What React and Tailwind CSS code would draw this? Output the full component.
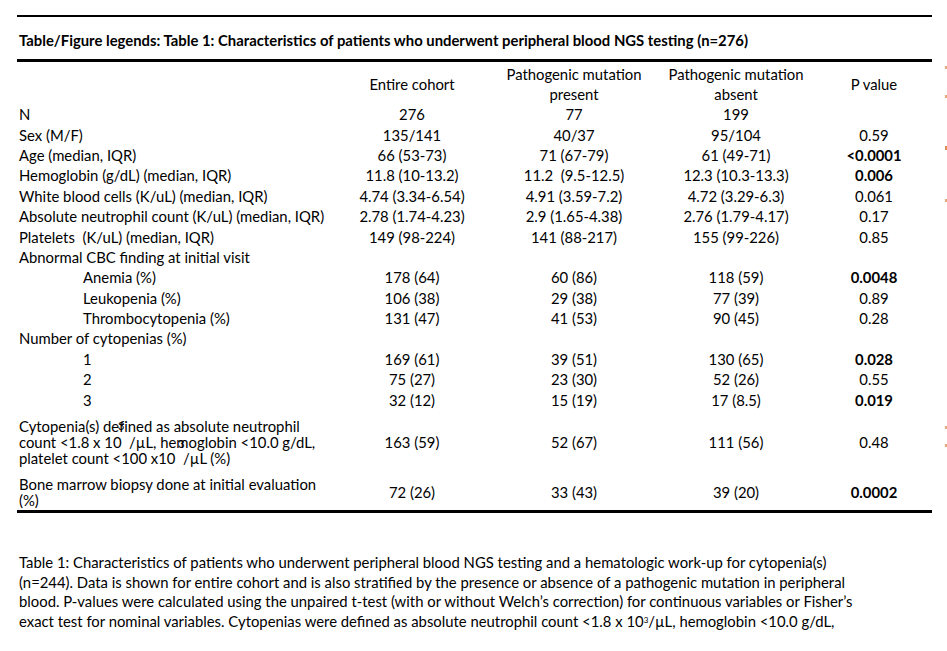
import React from 'react';

const rows = [
  { label: 'N', vals: ['276', '77', '199', ''] },
  { label: 'Sex (M/F)', vals: ['135/141', '40/37', '95/104', '0.59'] },
  { label: 'Age (median, IQR)', vals: ['66 (53-73)', '71 (67-79)', '61 (49-71)', '<0.0001'], bold: true },
  { label: 'Hemoglobin (g/dL) (median, IQR)', vals: ['11.8 (10-13.2)', '11.2  (9.5-12.5)', '12.3 (10.3-13.3)', '0.006'], bold: true },
  { label: 'White blood cells (K/uL) (median, IQR)', vals: ['4.74 (3.34-6.54)', '4.91 (3.59-7.2)', '4.72 (3.29-6.3)', '0.061'] },
  { label: 'Absolute neutrophil count (K/uL) (median, IQR)', vals: ['2.78 (1.74-4.23)', '2.9 (1.65-4.38)', '2.76 (1.79-4.17)', '0.17'] },
  { label: 'Platelets  (K/uL) (median, IQR)', vals: ['149 (98-224)', '141 (88-217)', '155 (99-226)', '0.85'] },
  { label: 'Abnormal CBC finding at initial visit', vals: ['', '', '', ''] },
  { label: 'Anemia (%)', vals: ['178 (64)', '60 (86)', '118 (59)', '0.0048'], bold: true, indent: true },
  { label: 'Leukopenia (%)', vals: ['106 (38)', '29 (38)', '77 (39)', '0.89'], indent: true },
  { label: 'Thrombocytopenia (%)', vals: ['131 (47)', '41 (53)', '90 (45)', '0.28'], indent: true },
  { label: 'Number of cytopenias (%)', vals: ['', '', '', ''] },
  { label: '1', vals: ['169 (61)', '39 (51)', '130 (65)', '0.028'], bold: true, indent: true },
  { label: '2', vals: ['75 (27)', '23 (30)', '52 (26)', '0.55'], indent: true },
  { label: '3', vals: ['32 (12)', '15 (19)', '17 (8.5)', '0.019'], bold: true, indent: true },
];

const grid = 'grid grid-cols-[313px_164px_160px_164px_112px]';

function Row({ label, vals, bold, indent }) {
  return (
    <div className={`${grid} h-[20.4px] items-center leading-[20px]`}>
      <div className={`whitespace-pre ${indent ? 'pl-[66px]' : 'pl-[2px]'}`}>{label}</div>
      {vals.map((v, i) => (
        <div key={i} className={`text-center whitespace-pre ${bold && i === 3 ? 'font-bold' : ''}`}>{v}</div>
      ))}
    </div>
  );
}

export default function App() {
  return (
    <div className="relative w-[947px] h-[651px] overflow-hidden bg-white text-black text-[14.85px] font-['Lato','Open_Sans',sans-serif]">
      <div className="ml-[17px] pt-[15px] w-[915px]">
        <div className="h-[2px] bg-black" />
        <div className="h-[42px] pt-[13px] pl-[2px] leading-[20px] font-bold">
          Table/Figure legends: Table 1: Characteristics of patients who underwent peripheral blood NGS testing (n=276)
        </div>
        <div className="h-[3px] bg-black" />

        {/* header */}
        <div className={`${grid} items-center pt-[1px] h-[42px] leading-[20px]`}>
          <div />
          <div className="text-center">Entire cohort</div>
          <div className="text-center">Pathogenic mutation<br />present</div>
          <div className="text-center">Pathogenic mutation<br />absent</div>
          <div className="text-center">P value</div>
        </div>

        {rows.map((r, i) => (
          <Row key={i} {...r} />
        ))}

        <div className={`${grid} items-center pt-[8px] leading-[16px]`}>
          <div className="pl-[2px]">
            Cytopenia(s) de
            <span className="relative">
              f<span className="absolute left-[-1px] top-[3px] text-[11px] leading-none">3</span>
            </span>
            ined as absolute neutrophil<br />
            count &lt;1.8 x 10 &nbsp;/µL, he
            <span className="relative">
              m<span className="absolute left-[2px] top-[5px] text-[11px] leading-none">3</span>
            </span>
            oglobin &lt;10.0 g/dL,<br />
            platelet count &lt;100 x10 &nbsp;/µL (%)
          </div>
          <div className="text-center">163 (59)</div>
          <div className="text-center">52 (67)</div>
          <div className="text-center">111 (56)</div>
          <div className="text-center">0.48</div>
        </div>

        <div className={`${grid} items-center pt-[10px] pb-[2px] leading-[16px]`}>
          <div className="pl-[2px]">
            Bone marrow biopsy done at initial evaluation<br />(%)
          </div>
          <div className="text-center">72 (26)</div>
          <div className="text-center">33 (43)</div>
          <div className="text-center">39 (20)</div>
          <div className="text-center font-bold">0.0002</div>
        </div>
      </div>
      <div className="ml-[17px] w-[915px] h-[3px] bg-[#000000]" />

      <div className="pl-[19px] mt-[40px] leading-[19.7px]">
        <div>Table 1: Characteristics of patients who underwent peripheral blood NGS testing and a hematologic work-up for cytopenia(s)</div>
        <div>(n=244). Data is shown for entire cohort and is also stratified by the presence or absence of a pathogenic mutation in peripheral</div>
        <div>blood. P-values were calculated using the unpaired t-test (with or without Welch’s correction) for continuous variables or Fisher’s</div>
        <div>
          exact test for nominal variables. Cytopenias were defined as absolute neutrophil count &lt;1.8 x 10
          <sup className="text-[8px]">3</sup>/µL, hemoglobin &lt;10.0 g/dL,
        </div>
      </div>

      {/* faint marks at right edge */}
      <div className="absolute right-0 top-[66px] w-[2px] h-[3px] bg-[#e8a878]" />
      <div className="absolute right-0 top-[95px] w-[2px] h-[3px] bg-[#e8a878]" />
      <div className="absolute right-0 top-[146px] w-[2px] h-[4px] bg-[#d89058]" />
      <div className="absolute right-0 top-[199px] w-[2px] h-[3px] bg-[#e8a878]" />
      <div className="absolute right-0 top-[426px] w-[2px] h-[3px] bg-[#e8a878]" />
      <div className="absolute right-0 top-[444px] w-[2px] h-[3px] bg-[#e8a878]" />
    </div>
  );
}
